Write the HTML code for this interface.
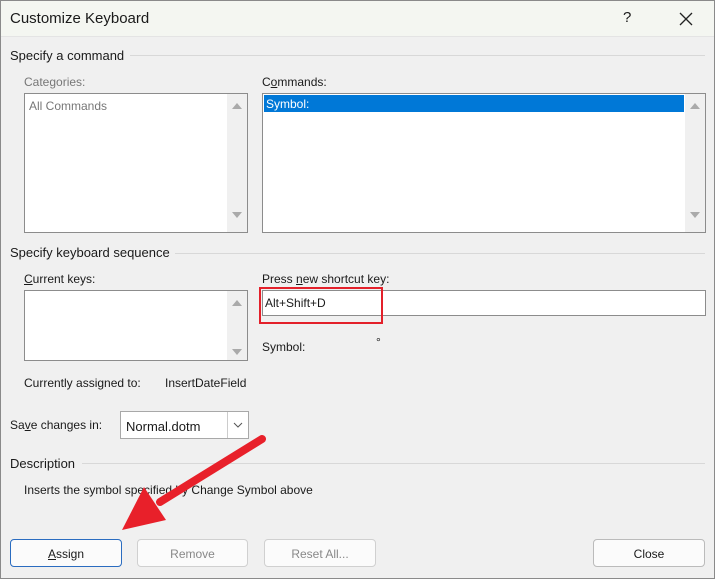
<!DOCTYPE html><html><head><style>
body{margin:0;width:715px;height:579px;overflow:hidden;font-family:"Liberation Sans",sans-serif;font-size:12px;color:#1a1a1a}
#w{position:absolute;left:0;top:0;width:715px;height:579px;background:#f0f0f0}
.a{position:absolute}
.t{position:absolute;white-space:nowrap}
.box{position:absolute;background:#fff;border:1px solid #8c8c8c;box-sizing:border-box}
.sb{position:absolute;right:0;top:0;bottom:0;width:20px;background:#f0f0f0}
.grp{position:absolute;height:1px;background:#d8d8d8}
.btn{position:absolute;height:28px;border:1px solid #d0d0d0;border-radius:4px;background:#fbfbfb;box-sizing:border-box;text-align:center;line-height:26px;color:#888}
u{text-decoration:underline}
</style></head><body><div id="w">
<div class="a" style="left:0;top:0;width:715px;height:36px;background:#f4f6f1;border-bottom:1px solid #e4e4e4"></div>
<div class="t" style="left:10px;top:10px;font-size:15px">Customize Keyboard</div>
<div class="t" style="left:623px;top:9px;font-size:15px">?</div>
<svg class="a" style="left:679px;top:12px" width="14" height="14"><path d="M1 1L13 13M13 1L1 13" stroke="#222" stroke-width="1.3"/></svg>

<div class="t" style="left:10px;top:48px;font-size:13px">Specify a command</div>
<div class="grp" style="left:130px;top:55px;width:575px"></div>
<div class="t" style="left:24px;top:75px;color:#777">Categories:</div>
<div class="box" style="left:24px;top:93px;width:224px;height:140px"><div class="sb"><svg class="a" style="left:5px;top:8px" width="10" height="120"><path d="M0 7L5 1L10 7Z" fill="#aaa"/><path d="M0 110L5 116L10 110Z" fill="#aaa"/></svg></div><div class="t" style="left:4px;top:5px;color:#777">All Commands</div></div>
<div class="t" style="left:262px;top:75px">C<u>o</u>mmands:</div>
<div class="box" style="left:262px;top:93px;width:444px;height:140px"><div class="sb"><svg class="a" style="left:5px;top:8px" width="10" height="120"><path d="M0 7L5 1L10 7Z" fill="#aaa"/><path d="M0 110L5 116L10 110Z" fill="#aaa"/></svg></div><div class="a" style="left:1px;top:1px;width:420px;height:17px;background:#0078d7"></div><div class="t" style="left:3px;top:3px;color:#fff">Symbol:</div></div>

<div class="t" style="left:10px;top:245px;font-size:13px">Specify keyboard sequence</div>
<div class="grp" style="left:175px;top:253px;width:530px"></div>
<div class="t" style="left:24px;top:272px"><u>C</u>urrent keys:</div>
<div class="box" style="left:24px;top:290px;width:224px;height:71px"><div class="sb"><svg class="a" style="left:5px;top:8px" width="10" height="60"><path d="M0 7L5 1L10 7Z" fill="#aaa"/><path d="M0 50L5 56L10 50Z" fill="#aaa"/></svg></div></div>
<div class="t" style="left:262px;top:272px">Press <u>n</u>ew shortcut key:</div>
<div class="box" style="left:262px;top:290px;width:444px;height:26px"></div>
<div class="a" style="left:259px;top:287px;width:124px;height:37px;border:2px solid #e3202a;box-sizing:border-box"></div>
<div class="t" style="left:265px;top:296px">Alt+Shift+D</div>
<div class="t" style="left:262px;top:340px">Symbol:</div>
<div class="t" style="left:376px;top:335px">°</div>
<div class="t" style="left:24px;top:376px">Currently assigned to:</div>
<div class="t" style="left:165px;top:376px">InsertDateField</div>

<div class="t" style="left:10px;top:418px">Sa<u>v</u>e changes in:</div>
<div class="box" style="left:120px;top:411px;width:129px;height:28px;border-color:#a8a8a8"><div class="t" style="left:5px;top:7px;font-size:13px">Normal.dotm</div><div class="a" style="left:106px;top:0;width:1px;height:26px;background:#ccc"></div><svg class="a" style="left:112px;top:10px" width="10" height="6"><path d="M1 1L5 5L9 1" stroke="#555" fill="none"/></svg></div>

<div class="t" style="left:10px;top:456px;font-size:13px">Description</div>
<div class="grp" style="left:82px;top:463px;width:623px"></div>
<div class="t" style="left:24px;top:483px">Inserts the symbol specified by Change Symbol above</div>

<div class="btn" style="left:10px;top:539px;width:112px;border-color:#2a6cc0;color:#1a1a1a;line-height:28px"><u>A</u>ssign</div>
<div class="btn" style="left:137px;top:539px;width:111px;line-height:28px">Remove</div>
<div class="btn" style="left:264px;top:539px;width:112px;line-height:28px">Reset All...</div>
<div class="btn" style="left:593px;top:539px;width:112px;border-color:#bbb;color:#1a1a1a;line-height:28px">Close</div>

<svg class="a" style="left:0;top:0" width="715" height="579"><path d="M262 439L160 502" stroke="#e8202a" stroke-width="8" stroke-linecap="round"/><path d="M122 530L144 487L166 520Z" fill="#e8202a"/></svg>
<div class="a" style="left:0;top:0;width:713px;height:577px;border:1px solid #8a8a8a"></div>
</div></body></html>
